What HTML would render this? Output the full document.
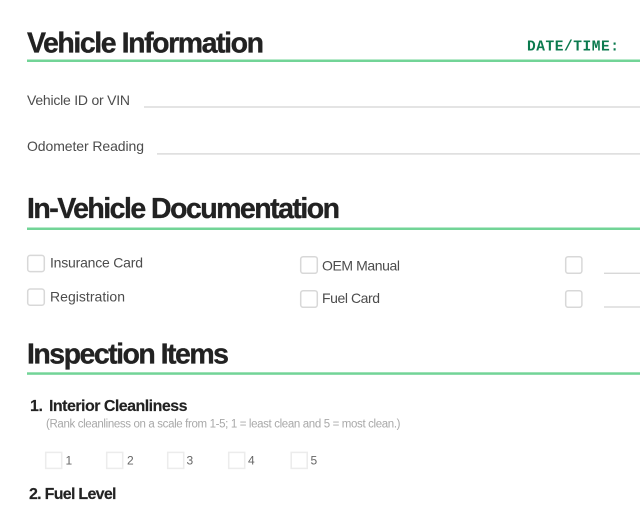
<!DOCTYPE html>
<html>
<head>
<meta charset="utf-8">
<style>
html,body{margin:0;padding:0;background:#fff;width:640px;height:512px;overflow:hidden}
svg{display:block}
text{font-family:"Liberation Sans",sans-serif}
.h{font-size:28.5px;font-weight:700;fill:#222;stroke:#222;stroke-width:.35}
.l{font-size:14px;fill:#4c4c4c}
.b{font-size:16px;font-weight:700;fill:#222;stroke:#222;stroke-width:.15}
.n{font-size:12px;fill:#666}
.c{fill:#fff;stroke:#d8d8d8;stroke-width:1.5}
.d{fill:#fff;stroke:#ececec;stroke-width:1.5}
</style>
</head>
<body>
<svg width="640" height="512" viewBox="0 0 640 512" xmlns="http://www.w3.org/2000/svg">
<rect width="640" height="512" fill="#fff"/>

<text class="h" x="27" y="52.5" textLength="237">Vehicle Information</text>
<text x="527" y="50.7" textLength="92" style="font-family:'Liberation Mono',monospace;font-size:14.5px;font-weight:700;fill:#0b7a4e">DATE/TIME:</text>
<rect x="27" y="59.5" width="613" height="2.5" fill="#72d497"/>

<text class="l" x="27" y="105" textLength="103">Vehicle ID or VIN</text>
<rect x="144" y="106.3" width="496" height="1.4" fill="#d8d8d8"/>
<text class="l" x="27" y="151" textLength="117">Odometer Reading</text>
<rect x="157" y="153.2" width="483" height="1.4" fill="#d8d8d8"/>

<text class="h" x="27" y="218" textLength="313">In-Vehicle Documentation</text>
<rect x="27" y="227.5" width="613" height="2.5" fill="#72d497"/>

<rect class="c" x="27.7" y="255.4" width="16.6" height="16.2" rx="2.5"/>
<text class="l" x="50" y="267.5" textLength="93">Insurance Card</text>
<rect class="c" x="27.7" y="289" width="16.6" height="16.2" rx="2.5"/>
<text class="l" x="50" y="301.5" textLength="75">Registration</text>

<rect class="c" x="300.7" y="256.7" width="16.6" height="16.6" rx="2.5"/>
<text class="l" x="322" y="270.5" textLength="78">OEM Manual</text>
<rect class="c" x="300.7" y="290.7" width="16.6" height="16.6" rx="2.5"/>
<text class="l" x="322" y="302.8" textLength="58">Fuel Card</text>

<rect class="c" x="565.7" y="256.7" width="16.2" height="16.6" rx="2.5"/>
<rect x="604" y="272.6" width="36" height="1.4" fill="#d8d8d8"/>
<rect class="c" x="565.7" y="290.7" width="16.2" height="16.6" rx="2.5"/>
<rect x="604" y="306.3" width="36" height="1.4" fill="#d8d8d8"/>

<text class="h" x="27" y="363.5" textLength="202">Inspection Items</text>
<rect x="27" y="372.3" width="613" height="2.5" fill="#72d497"/>

<text class="b" x="30" y="411" textLength="13">1.</text>
<text class="b" x="49" y="411" textLength="138.5">Interior Cleanliness</text>
<text x="46" y="427.5" textLength="354.5" style="font-size:11.5px;fill:#a8a8a8">(Rank cleanliness on a scale from 1-5; 1 = least clean and 5 = most clean.)</text>

<rect class="d" x="45.7" y="452.4" width="16" height="16"/>
<text class="n" x="65.5" y="464.5">1</text>
<rect class="d" x="106.7" y="452.4" width="16" height="16"/>
<text class="n" x="127" y="464.5">2</text>
<rect class="d" x="167.7" y="452.4" width="16" height="16"/>
<text class="n" x="186.5" y="464.5">3</text>
<rect class="d" x="228.7" y="452.4" width="16" height="16"/>
<text class="n" x="248" y="464.5">4</text>
<rect class="d" x="291.2" y="452.4" width="16" height="16"/>
<text class="n" x="310.5" y="464.5">5</text>

<text class="b" x="29" y="499" textLength="87.5">2. Fuel Level</text>
</svg>
</body>
</html>
